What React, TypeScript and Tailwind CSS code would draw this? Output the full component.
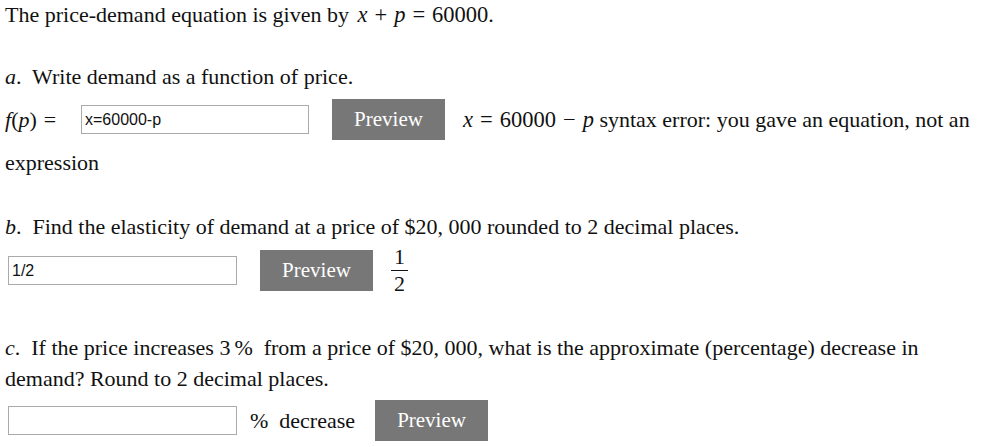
import React from 'react';

// small helpers for math bits, MathJax-ish look
const Mi = ({ children }: { children: React.ReactNode }) => (
  <span className="italic">{children}</span>
);
const Op = ({ children }: { children: React.ReactNode }) => (
  <span className="px-[7px]">{children}</span>
);

const PreviewBtn = () => (
  <button className="h-[41px] w-[113px] bg-[#777777] text-white text-[21px] leading-none shrink-0">
    Preview
  </button>
);

export default function App() {
  return (
    <div className="w-[985px] h-[447px] bg-white text-[#111] text-[22px] pl-[5px] overflow-hidden" style={{ fontFamily: '"Liberation Serif", "Times New Roman", serif' }}>
      {/* intro */}
      <div className="h-[30px] leading-[30px]">
        The price-demand equation is given by <span className="ml-[3px] text-[22.5px]"><Mi>x</Mi><Op>+</Op><Mi>p</Mi><Op>=</Op>60000</span>.
      </div>

      {/* part a */}
      <div className="mt-[32px] h-[30px] leading-[30px]">
        <Mi>a</Mi>.&nbsp; Write demand as a function of price.
      </div>
      <div className="mt-[7px] flex items-center h-[41px] whitespace-nowrap">
        <span className="w-[76px]"><Mi>f</Mi>(<Mi>p</Mi>)<Op>=</Op></span>
        <input
          className="w-[228px] h-[29px] border border-[#aaaaaa] px-[3px] text-[16px] outline-none"
          style={{ fontFamily: '"Liberation Sans", Arial, sans-serif' }}
          defaultValue="x=60000-p"
        />
        <span className="ml-[23px]"><PreviewBtn /></span>
        <span className="ml-[18px]">
          <span className="text-[22.5px]"><Mi>x</Mi><Op>=</Op>60000<Op>−</Op><Mi>p</Mi></span> syntax error: you gave an equation, not an
        </span>
      </div>
      <div className="mt-[8px] h-[30px] leading-[30px]">expression</div>

      {/* part b */}
      <div className="mt-[34px] h-[30px] leading-[30px]">
        <Mi>b</Mi>.&nbsp; Find the elasticity of demand at a price of $20, 000 rounded to 2 decimal places.
      </div>
      <div className="mt-[7px] flex items-center h-[43px]">
        <input
          className="ml-[3px] w-[229px] h-[29px] border border-[#aaaaaa] px-[3px] text-[16px] outline-none"
          style={{ fontFamily: '"Liberation Sans", Arial, sans-serif' }}
          defaultValue="1/2"
        />
        <span className="ml-[23px]"><PreviewBtn /></span>
        <span className="ml-[18px] inline-flex flex-col items-center leading-[26px]">
          <span>1</span>
          <span className="w-[17px] border-t border-[#111]" />
          <span>2</span>
        </span>
      </div>

      {/* part c */}
      <div className="mt-[40px] leading-[31px]">
        <Mi>c</Mi>.&nbsp; If the price increases 3<span className="pl-[4px]">%</span>&nbsp; from a price of $20, 000, what is the approximate (percentage) decrease in
        <br />
        demand? Round to 2 decimal places.
      </div>
      <div className="mt-[5px] flex items-center h-[42px]">
        <input
          className="ml-[3px] w-[229px] h-[29px] border border-[#aaaaaa] px-[3px] text-[16px] outline-none"
          style={{ fontFamily: '"Liberation Sans", Arial, sans-serif' }}
        />
        <span className="ml-[13px]">%&nbsp; decrease</span>
        <span className="ml-[20px]"><PreviewBtn /></span>
      </div>
    </div>
  );
}
